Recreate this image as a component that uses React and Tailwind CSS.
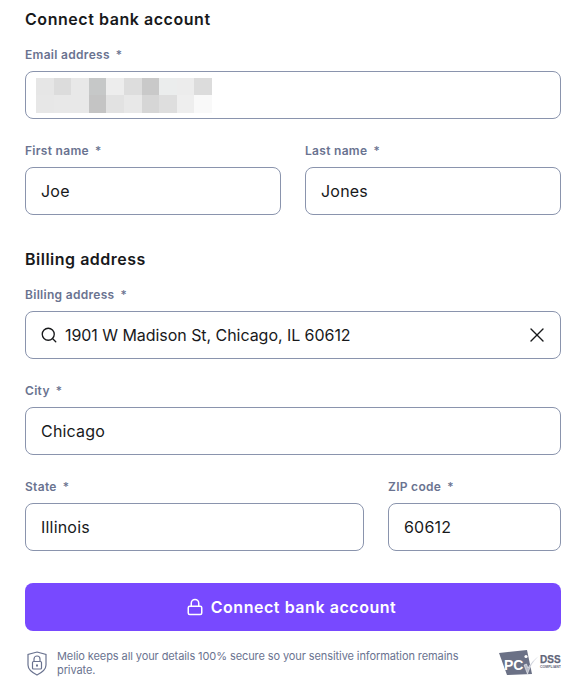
import { Lock, Search, X } from 'lucide-react'

const mosaic = [
  ['#e6e6e6', '#dcdcdc', '#e8e8e8', '#c6c8c8', '#ededed', '#dddddd', '#c9c9c9', '#ebeded', '#ececec', '#dcdcdc'],
  ['#e7e7e7', '#e8e8e8', '#e8e8e8', '#c4c4c4', '#e2e2e2', '#e8e8e8', '#d6d6d6', '#dedede', '#eeeeee', '#f9f9f9'],
]

function Label({ children }) {
  return (
    <label className="block h-4 mb-2 text-xs leading-4 font-semibold text-[#6a7390] tracking-[0.3px]">
      {children}
      <span className="ml-1.5 font-medium">*</span>
    </label>
  )
}

function Field({ label, value, className = '' }) {
  return (
    <div className={className}>
      <Label>{label}</Label>
      <div className="h-12 px-[15px] flex items-center rounded-lg border border-[#8a94ad] bg-white text-base text-[#18191b] tracking-[0.2px]">
        {value}
      </div>
    </div>
  )
}

function ShieldIcon() {
  return (
    <svg width="20" height="25" viewBox="0 0 20 25" fill="none" stroke="#6a7390" strokeWidth="1.2" className="shrink-0">
      <path d="M10 1 L19 3.5 V14 C19 19 14 22 10 24 C6 22 1 19 1 14 V3.5 Z" />
      <rect x="5.5" y="10.5" width="9" height="7.5" rx="1" />
      <path d="M7 10.5 V8 a3 3 0 0 1 6 0 V10.5" />
      <rect x="9" y="13.5" width="2" height="2" fill="#6a7390" stroke="none" />
    </svg>
  )
}

function PciLogo() {
  return (
    <svg width="62" height="26" viewBox="0 0 62 26" className="shrink-0">
      <polygon points="0,3 28,0 33,24 8,25" fill="#6b7186" />
      <text x="5" y="20" fontFamily="Liberation Sans, sans-serif" fontWeight="700" fontSize="14" fill="#fff">PC</text>
      <path d="M25 15 L28.5 24 C31 16 35 10 40 6 C35 9 32 13 29 18 L27.5 14 Z" fill="#b9bdc9" stroke="#fff" strokeWidth="0.5" />
      <circle cx="27" cy="6.5" r="1.6" fill="#fff" />
      <text x="41" y="13" fontFamily="Liberation Sans, sans-serif" fontWeight="700" fontSize="10" fill="#5f6579" stroke="#5f6579" strokeWidth="0.25">DSS</text>
      <text x="41" y="17.5" textLength="21" lengthAdjust="spacingAndGlyphs" fontFamily="Liberation Sans, sans-serif" fontWeight="700" fontSize="3.2" fill="#5f6579">COMPLIANT</text>
    </svg>
  )
}

export default function App() {
  return (
    <div className="w-[573px] h-[697px] bg-white pl-[25px] pr-3 pt-[9px] font-['Inter',sans-serif] overflow-hidden">
      <h2 className="text-base leading-5 font-semibold text-[#18191b] mb-[18px] tracking-[0.55px]">Connect bank account</h2>

      <div className="mb-6">
        <Label>Email address</Label>
        <div className="h-12 px-2.5 flex items-center rounded-lg border border-[#8a94ad] bg-white">
          <div className="flex flex-col">
            {mosaic.map((row, i) => (
              <div key={i} className="flex h-[17.5px]">
                {row.map((c, j) => (
                  <div key={j} className="w-[17.6px]" style={{ backgroundColor: c }} />
                ))}
              </div>
            ))}
          </div>
        </div>
      </div>

      <div className="flex gap-6">
        <Field label="First name" value="Joe" className="flex-1" />
        <Field label="Last name" value="Jones" className="flex-1" />
      </div>

      <h2 className="mt-[34px] mb-[18px] text-base leading-5 font-semibold text-[#18191b] tracking-[0.5px]">Billing address</h2>

      <div className="mb-6">
        <Label>Billing address</Label>
        <div className="h-12 pl-3.5 pr-[11px] flex items-center rounded-lg border border-[#8a94ad] bg-white text-base text-[#18191b] tracking-[-0.05px]">
          <Search size={18} strokeWidth={1.8} className="mr-[7px] shrink-0" />
          <span className="flex-1">1901 W Madison St, Chicago, IL 60612</span>
          <X size={24} strokeWidth={1.4} className="shrink-0" />
        </div>
      </div>

      <Field label="City" value="Chicago" className="mb-6" />

      <div className="flex gap-6">
        <Field label="State" value="Illinois" className="w-[339px]" />
        <Field label="ZIP code" value="60612" className="flex-1" />
      </div>

      <button className="mt-8 w-full h-12 pr-1 rounded-lg bg-[#7849ff] flex items-center justify-center gap-[7px] text-white text-base font-semibold tracking-[0.55px]">
        <Lock size={18} strokeWidth={2} />
        Connect bank account
      </button>

      <div className="mt-[18px] flex items-center gap-2.5 pl-0.5">
        <ShieldIcon />
        <p className="flex-1 text-[11px] leading-[14px] text-[#6a7390] tracking-[-0.09px]">
          Melio keeps all your details 100% secure so your sensitive information remains private.
        </p>
        <PciLogo />
      </div>
    </div>
  )
}
